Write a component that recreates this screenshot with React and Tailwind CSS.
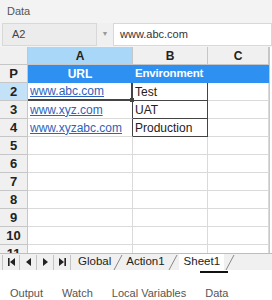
import React from "react";

const rows = [
  { n: "P", a: "URL", b: "Environment", head: true },
  { n: "2", a: "www.abc.com", b: "Test", sel: true },
  { n: "3", a: "www.xyz.com", b: "UAT" },
  { n: "4", a: "www.xyzabc.com", b: "Production" },
  { n: "5" },
  { n: "6" },
  { n: "7" },
  { n: "8" },
  { n: "9" },
  { n: "10" },
  { n: "11" },
];

const NavBtn = ({ dir, bar }) => (
  <div className="w-[17px] h-[15px] flex items-center justify-center border-r border-[#c4c4c4]">
    <svg width="9" height="8" viewBox="0 0 9 8">
      {dir === "l" ? (
        <>
          {bar && <rect x="1" y="0" width="1.6" height="8" fill="#222" />}
          <polygon points={bar ? "8,0 8,8 3,4" : "7,0 7,8 2,4"} fill="#222" />
        </>
      ) : (
        <>
          <polygon points={bar ? "1,0 1,8 6,4" : "2,0 2,8 7,4"} fill="#222" />
          {bar && <rect x="6.4" y="0" width="1.6" height="8" fill="#222" />}
        </>
      )}
    </svg>
  </div>
);

const Slant = () => (
  <svg width="12" height="17" viewBox="0 0 12 17" className="shrink-0">
    <line x1="2" y1="16" x2="10" y2="1" stroke="#888" strokeWidth="1" />
  </svg>
);

const App = () => {
  return (
    <div className="w-[272px] h-[300px] overflow-hidden bg-white text-[#222] font-['Liberation_Sans',Arial,sans-serif]">
      {/* title strip */}
      <div className="h-[23px] bg-[#f3f3f3] flex items-center px-[7px] text-[11px] text-[#555]">
        Data
      </div>

      {/* name box + formula */}
      <div className="h-[24px] bg-[#f3f3f3] flex pl-[2px] pb-[1px]">
        <div className="w-[95px] h-[23px] bg-[#ececec] border border-[#d8d8d8] flex items-center pl-[9px] text-[11px] text-[#444]">
          A2
        </div>
        <div className="w-[16px] h-[23px] bg-[#f0f0f0] flex items-center justify-center text-[7px] text-[#999]">
          ▼
        </div>
        <div className="flex-1 h-[23px] bg-white border border-[#d8d8d8] flex items-center pl-[6px] text-[11px] text-[#333]">
          www.abc.com
        </div>
      </div>

      {/* sheet */}
      <div className="h-[206px] overflow-hidden border-r border-[#c8c8c8] w-[270px]">
        <div className="grid grid-cols-[28px_105px_75px_61px]">
          <div className="h-[18px] bg-[#f0f0f0] border-r border-b border-[#c6c6c6]" />
          <div className="h-[18px] bg-[#a9d7f7] border-r border-b border-[#c6c6c6] flex items-center justify-center text-[12px] font-bold">
            A
          </div>
          <div className="h-[18px] bg-[#f0f0f0] border-r border-b border-[#c6c6c6] flex items-center justify-center text-[12px] font-bold">
            B
          </div>
          <div className="h-[18px] bg-[#f0f0f0] border-r border-b border-[#c6c6c6] flex items-center justify-center text-[12px] font-bold">
            C
          </div>

          {rows.map((r) => (
            <React.Fragment key={r.n}>
              <div
                className={`h-[18px] border-r border-b border-[#c6c6c6] flex items-center justify-center text-[13px] font-bold ${
                  r.sel ? "bg-[#c3e2f7]" : "bg-[#f0f0f0]"
                }`}
              >
                {r.n}
              </div>
              {r.head ? (
                <>
                  <div className="h-[18px] bg-[#2e90f0] border-r border-b border-[#2e90f0] flex items-center justify-center text-[12px] font-bold text-white">
                    {r.a}
                  </div>
                  <div className="h-[18px] bg-[#2e90f0] border-b border-[#2e90f0] flex items-center pl-[2px] text-[11.5px] font-bold text-white tracking-[-0.2px]">
                    {r.b}
                  </div>
                  <div className="h-[18px] bg-[#2e90f0] border-b border-[#2e90f0]" />
                </>
              ) : r.a ? (
                <>
                  <div
                    className={`relative h-[18px] border-r border-b flex items-center pl-[2px] text-[12px] text-[#2f62b8] underline ${
                      r.sel ? "border-[#444] border-r-2 border-b-2" : "border-r-[#444] border-b-[#dadada]"
                    }`}
                  >
                    {r.a}
                    {r.sel && (
                      <div className="absolute right-[-3px] bottom-[-3px] w-[4px] h-[4px] bg-[#444]" />
                    )}
                  </div>
                  <div className="h-[18px] border-r border-b border-[#444] flex items-center pl-[2px] text-[12px]">
                    {r.b}
                  </div>
                  <div className="h-[18px] border-r border-b border-[#dadada]" />
                </>
              ) : (
                <>
                  <div className="h-[18px] border-r border-b border-[#dadada]" />
                  <div className="h-[18px] border-r border-b border-[#dadada]" />
                  <div className="h-[18px] border-r border-b border-[#dadada]" />
                </>
              )}
            </React.Fragment>
          ))}
        </div>
      </div>

      {/* sheet tabs */}
      <div className="h-[17px] bg-[#f0f0f0] border-t border-[#bdbdbd] flex items-center pl-[2px] text-[11.5px] text-[#222]">
        <div className="flex border-l border-[#c4c4c4]">
          <NavBtn dir="l" bar />
          <NavBtn dir="l" />
          <NavBtn dir="r" />
          <NavBtn dir="r" bar />
        </div>
        <div className="pl-[7px] pr-[1px]">Global</div>
        <Slant />
        <div className="px-[2px]">Action1</div>
        <Slant />
        <div className="h-[16px] bg-white flex items-center px-[4px] pl-[5px]">Sheet1</div>
        <Slant />
      </div>

      {/* bottom panel */}
      <div className="h-[30px] bg-white relative">
        <div className="absolute left-[200px] top-[1px] w-[28px] h-[2px] bg-[#111]" />
        <div className="flex items-center h-full pt-[16px] pl-[10px] gap-[19px] text-[11px] text-[#555]">
          <span>Output</span>
          <span>Watch</span>
          <span>Local Variables</span>
          <span>Data</span>
        </div>
      </div>
    </div>
  );
};

export default App;
